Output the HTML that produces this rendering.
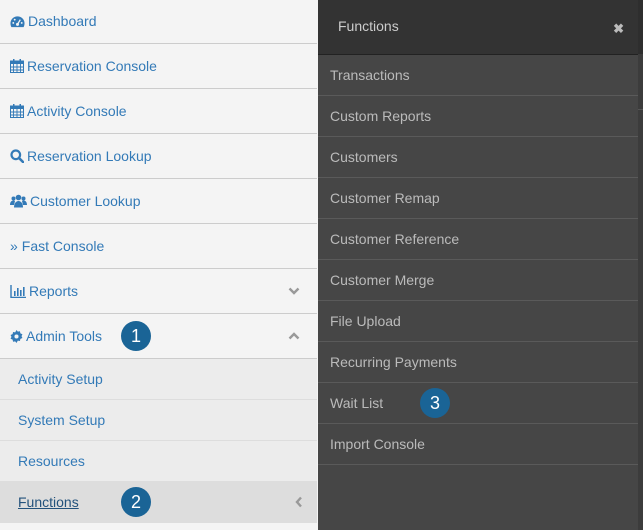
<!DOCTYPE html>
<html><head><meta charset="utf-8"><style>
*{margin:0;padding:0;box-sizing:border-box}
body{width:643px;height:530px;overflow:hidden;background:#f4f4f4;font-family:"Liberation Sans",sans-serif;font-size:14px;position:relative}
#left{position:absolute;left:0;top:-1px;width:317px;height:531px;background:#f4f4f4}
.row{position:relative;height:45px;border-bottom:1px solid #ccc;color:#337ab7;display:flex;align-items:center;padding-left:10px}
.row svg{margin-right:3px}
.sub{position:relative;height:41px;border-bottom:1px solid #ddd;background:#ececec;color:#337ab7;display:flex;align-items:center;padding-left:18px}
.sub.act{background:#ddd;text-decoration:underline;color:#23527c}
.chev{position:absolute;right:14px;top:50%;transform:translateY(-50%)}
.badge{position:absolute;width:30px;height:30px;border-radius:50%;background:#1a6496;color:#fff;font-size:18px;display:flex;align-items:center;justify-content:center}
#right{position:absolute;left:318px;top:0;width:320px;height:530px;background:#464646}
#rh{height:55px;background:#333;border-bottom:1px solid #222;color:#ccc;font-size:14px;padding-left:20px;display:flex;align-items:center;position:relative;padding-bottom:3px}
.ri{height:41px;border-bottom:1px solid #5a5a5a;color:#bbb;display:flex;align-items:center;padding-left:12px;position:relative}
#strip{position:absolute;left:638px;top:0;width:5px;height:530px;background:#3c3c3c}
#strip2{position:absolute;left:638px;top:0;width:5px;height:54px;background:#2e2e2e}
#strip3{position:absolute;left:638px;top:109px;width:5px;height:1px;background:#555}
</style></head><body>
<div id="left">
<div class="row"><svg width="15" height="13" viewBox="0 0 16 13"><path d="M8 1A7.5 7.5 0 0 0 .5 8.5c0 1.5.4 2.8 1 4h13c.6-1.2 1-2.5 1-4A7.5 7.5 0 0 0 8 1z" fill="#337ab7"/><circle cx="8" cy="9.5" r="1.6" fill="#f4f4f4"/><path d="M8 9.5L11 4.5" stroke="#f4f4f4" stroke-width="1.3"/><circle cx="3.5" cy="8" r="1" fill="#f4f4f4"/><circle cx="5" cy="4.5" r="1" fill="#f4f4f4"/><circle cx="12.5" cy="8" r="1" fill="#f4f4f4"/></svg>Dashboard</div>
<div class="row"><svg width="14" height="14" viewBox="0 0 14 14"><rect x=".5" y="2" width="13" height="11.5" fill="none" stroke="#337ab7"/><rect x=".5" y="2" width="13" height="3" fill="#337ab7"/><path d="M3.5 5v8.5M7 5v8.5M10.5 5v8.5M.5 8h13M.5 11h13" stroke="#337ab7" stroke-width=".9"/><rect x="3" y="0" width="1.5" height="3" fill="#337ab7"/><rect x="9.5" y="0" width="1.5" height="3" fill="#337ab7"/></svg>Reservation Console</div>
<div class="row"><svg width="14" height="14" viewBox="0 0 14 14"><rect x=".5" y="2" width="13" height="11.5" fill="none" stroke="#337ab7"/><rect x=".5" y="2" width="13" height="3" fill="#337ab7"/><path d="M3.5 5v8.5M7 5v8.5M10.5 5v8.5M.5 8h13M.5 11h13" stroke="#337ab7" stroke-width=".9"/><rect x="3" y="0" width="1.5" height="3" fill="#337ab7"/><rect x="9.5" y="0" width="1.5" height="3" fill="#337ab7"/></svg>Activity Console</div>
<div class="row"><svg width="14" height="14" viewBox="0 0 14 14"><circle cx="5.8" cy="5.8" r="4.3" fill="none" stroke="#337ab7" stroke-width="2.2"/><path d="M9 9l4 4" stroke="#337ab7" stroke-width="2.6" stroke-linecap="round"/></svg>Reservation Lookup</div>
<div class="row"><svg width="17" height="14" viewBox="0 0 17 14"><circle cx="8.5" cy="3.5" r="2.8" fill="#337ab7"/><circle cx="3.5" cy="4.5" r="2" fill="#337ab7"/><circle cx="13.5" cy="4.5" r="2" fill="#337ab7"/><path d="M4 13.5c0-4 2-6.5 4.5-6.5S13 9.5 13 13.5z" fill="#337ab7"/><path d="M0 11c0-3 1.5-4.5 3.5-4.5 1 0 1.5.5 1.5.5L4 11zM17 11c0-3-1.5-4.5-3.5-4.5-1 0-1.5.5-1.5.5l1 4z" fill="#337ab7"/></svg>Customer Lookup</div>
<div class="row"><span style="margin-right:4px">»</span>Fast Console</div>
<div class="row"><svg width="16" height="13" viewBox="0 0 16 13"><path d="M1 0v12.5h15" stroke="#337ab7" stroke-width="1.4" fill="none"/><rect x="4" y="6" width="1.6" height="5" fill="#337ab7"/><rect x="7" y="3" width="1.6" height="8" fill="#337ab7"/><rect x="10" y="5" width="1.6" height="6" fill="#337ab7"/><rect x="13" y="2" width="1.6" height="9" fill="#337ab7"/></svg>Reports<svg class="chev" width="12" height="8" viewBox="0 0 12 8"><path d="M1.5 1.5L6 6l4.5-4.5" stroke="#999" stroke-width="2.4" fill="none"/></svg></div>
<div class="row"><svg width="13" height="13" viewBox="0 0 14 14"><path d="M7 0l1.4 1.8 2.3-.5.5 2.3 2.2 1-1 2 1 2-2.2 1-.5 2.3-2.3-.5L7 14l-1.4-1.8-2.3.5-.5-2.3-2.2-1 1-2-1-2 2.2-1 .5-2.3 2.3.5z" fill="#337ab7"/><circle cx="7" cy="7" r="2.2" fill="#f4f4f4"/></svg>Admin Tools<span class="badge" style="left:121px;top:7px">1</span><svg class="chev" width="12" height="8" viewBox="0 0 12 8"><path d="M1.5 6.5L6 2l4.5 4.5" stroke="#999" stroke-width="2.4" fill="none"/></svg></div>
<div class="sub">Activity Setup</div>
<div class="sub">System Setup</div>
<div class="sub">Resources</div>
<div class="sub act">Functions<span class="badge" style="left:121px;top:5px;text-decoration:none">2</span><svg class="chev" width="8" height="12" viewBox="0 0 8 12" style="right:14px"><path d="M6 1.5L2 6l4 4.5" stroke="#999" stroke-width="2.4" fill="none"/></svg></div>
</div>
<div id="right">
<div id="rh">Functions<span style="position:absolute;right:14px;top:21px;color:#bbb;font-size:13px;font-weight:bold">✖</span></div>
<div class="ri">Transactions</div>
<div class="ri">Custom Reports</div>
<div class="ri">Customers</div>
<div class="ri">Customer Remap</div>
<div class="ri">Customer Reference</div>
<div class="ri">Customer Merge</div>
<div class="ri">File Upload</div>
<div class="ri">Recurring Payments</div>
<div class="ri">Wait List<span class="badge" style="left:102px;top:5px">3</span></div>
<div class="ri">Import Console</div>
</div>
<div id="strip"></div><div id="strip2"></div><div id="strip3"></div>
</body></html>
